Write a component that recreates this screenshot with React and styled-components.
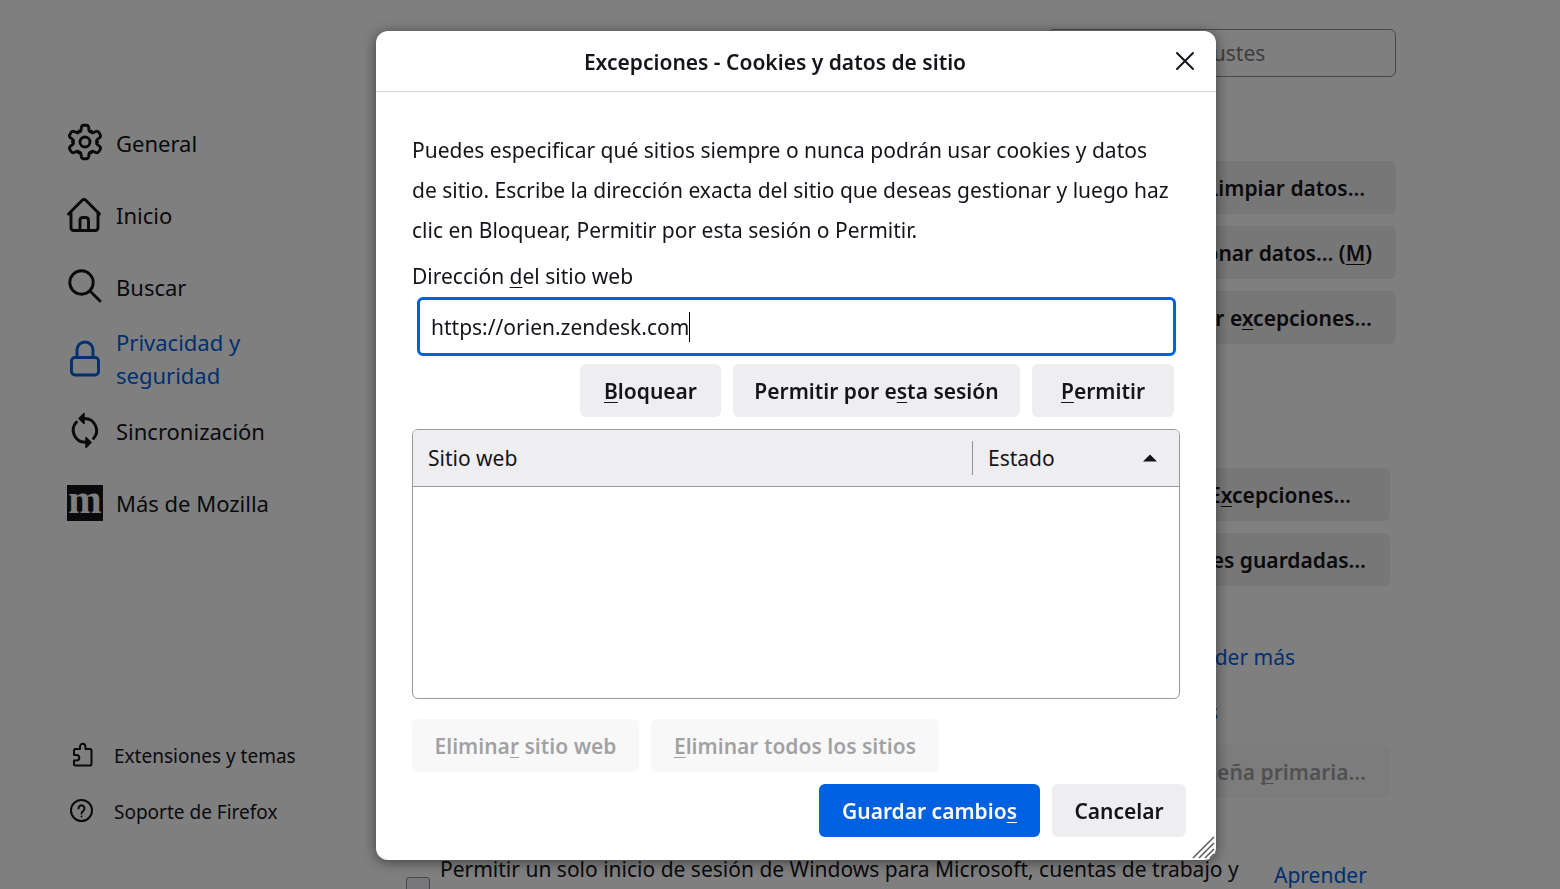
import React from "react";
import styled, { createGlobalStyle } from "styled-components";

const GlobalStyle = createGlobalStyle`
  * {
    box-sizing: border-box;
  }
  body {
    margin: 0;
    background: #fff;
    color: #15141a;
    font-family: "Noto Sans", "Open Sans", sans-serif;
    font-size: 21px;
  }
  button, input {
    font: inherit;
    color: inherit;
  }
`;

const Page = styled.div`
  display: flex;
  height: 100vh;
  overflow: hidden;
`;

const Sidebar = styled.aside`
  flex: 0 0 406px;
  display: flex;
  flex-direction: column;
  padding: 107px 100px 49px 67px;
`;

const NavList = styled.nav`
  display: flex;
  flex-direction: column;
  margin-top: ${(p) => (p.$bottom ? "auto" : "0")};
`;

const NavItem = styled.a`
  display: flex;
  align-items: center;
  gap: ${(p) => (p.$small ? "16px" : "13px")};
  height: ${(p) => (p.$small ? "56px" : "72px")};
  padding-left: ${(p) => (p.$small ? "2px" : "0")};
  font-size: ${(p) => (p.$small ? "19px" : "22px")};
  line-height: 33px;
  color: ${(p) => (p.$active ? "#0061e0" : "inherit")};
  text-decoration: none;
  svg {
    flex: none;
    overflow: visible;
    fill: none;
    stroke: currentColor;
    stroke-width: 2.9;
    stroke-linecap: round;
    stroke-linejoin: round;
  }
`;

const MozillaMark = styled.span`
  flex: none;
  width: 36px;
  height: 36px;
  background: #15141a;
  color: #fff;
  font: bold 40px/30px "Liberation Serif", serif;
  text-align: center;
`;

const Main = styled.main`
  flex: 1;
  max-width: 990px;
  display: flex;
  flex-direction: column;
  padding-top: 29px;
`;

const SearchInput = styled.input`
  align-self: flex-end;
  flex: none;
  width: 348px;
  height: 48px;
  padding: 0 0 0 42px;
  border: 1px solid #8f8f9d;
  border-radius: 6px;
  background: #fff;
  &::placeholder {
    color: #7b7b80;
    opacity: 1;
  }
`;

const Button = styled.button`
  flex: none;
  height: 53px;
  min-width: ${(p) => p.$min || "134px"};
  padding: 0 16px;
  border: 0;
  border-radius: 6px;
  background: ${(p) => (p.$primary ? "#0061e0" : "#eeeef0")};
  color: ${(p) => (p.$primary ? "#fbfbfe" : "#15141a")};
  font-weight: 600;
  white-space: nowrap;
  &:disabled {
    opacity: 0.4;
  }
`;

const ButtonStack = styled.div`
  align-self: flex-end;
  display: flex;
  flex-direction: column;
  align-items: flex-end;
  gap: 12px;
  margin: ${(p) => p.$top} ${(p) => (p.$inset ? "6px" : "0")} 0 0;
  ${Button} {
    padding: 0 24px;
  }
`;

const Key = styled.u`
  text-decoration-thickness: 1px;
  text-underline-offset: 3px;
  text-decoration-skip-ink: none;
`;

const LinkLine = styled.p`
  display: flex;
  justify-content: flex-end;
  margin: ${(p) => p.$top} ${(p) => p.$right} 0 0;
  line-height: 32px;
`;

const Link = styled.a`
  color: #0061e0;
  text-decoration: none;
`;

const CheckRow = styled.div`
  display: flex;
  align-items: flex-start;
  flex: none;
  margin-top: 55px;
  line-height: 32px;
`;

const Checkbox = styled.input`
  appearance: none;
  flex: none;
  width: 24px;
  height: 24px;
  margin: 24px 10px 0 0;
  border: 1px solid #8f8f9d;
  border-radius: 3px;
  background: #f0f0f4;
`;

const CheckLabel = styled.label`
  flex: 0 0 834px;
`;

const MoreLink = styled(Link)`
  padding-top: 6px;
`;

const Overlay = styled.div`
  position: fixed;
  inset: 0;
  display: flex;
  align-items: center;
  justify-content: center;
  padding: 2px 0 0 32px;
  background: rgba(0, 0, 0, 0.5);
`;

const Dialog = styled.section`
  position: relative;
  width: 100%;
  max-width: 840px;
  border-radius: 12px;
  background: #fff;
  box-shadow: 0 2px 14px rgba(0, 0, 0, 0.5);
`;

const DialogHeader = styled.header`
  display: flex;
  align-items: center;
  height: 61px;
  padding: 1px 20px 0 0;
  border-bottom: 1px solid #d8d8da;
`;

const Title = styled.h1`
  flex: 1;
  margin: 0;
  font-size: 21px;
  font-weight: 600;
  text-align: center;
`;

const CloseButton = styled.button`
  display: flex;
  padding: 0;
  border: 0;
  background: none;
`;

const DialogBody = styled.div`
  display: flex;
  flex-direction: column;
  padding: 38px 36px 0;
`;

const Intro = styled.p`
  margin: 0;
  line-height: 40px;
  white-space: nowrap;
`;

const FieldLabel = styled.label`
  margin-top: 10px;
  line-height: 32px;
`;

const Field = styled.div`
  display: flex;
  align-items: center;
  height: 59px;
  margin: 5px 4px 8px 5px;
  padding: 0 11px;
  border: 3px solid #0061e0;
  border-radius: 6px;
`;

const UrlInput = styled.input`
  field-sizing: content;
  padding: 0;
  border: 0;
  outline: 0;
  background: none;
`;

const Caret = styled.span`
  width: 1px;
  height: 30px;
  background: #000;
`;

const Actions = styled.div`
  display: flex;
  justify-content: ${(p) => (p.$end ? "flex-end" : "flex-start")};
  gap: 12px;
  padding: ${(p) => p.$pad || "0"};
`;

const TableFrame = styled.div`
  height: 270px;
  margin: 12px 0 20px;
  border: 1px solid #9a9a9e;
  border-radius: 6px;
  overflow: hidden;
`;

const Table = styled.table`
  width: 100%;
  border-collapse: collapse;
  table-layout: fixed;
`;

const Th = styled.th`
  width: ${(p) => p.$width || "auto"};
  height: 56px;
  padding: 0;
  background: #eeeef0;
  border-bottom: 1px solid #9a9a9e;
  font-weight: 400;
  text-align: left;
`;

const ThInner = styled.div`
  display: flex;
  align-items: center;
  justify-content: space-between;
  height: 34px;
  padding: 0 22px 0 15px;
  border-left: ${(p) => (p.$divided ? "1px solid #8f8f9d" : "0")};
`;

const Grip = styled.svg`
  position: absolute;
  right: 1px;
  bottom: 1px;
`;

const GearIcon = () => (
  <svg width="36" height="36" viewBox="-18 -17 36 36">
    <circle r="5" />
    {[0, 60, 120, 180, 240, 300].map((a) => (
      <path
        key={a}
        transform={`rotate(${a})`}
        d="M-6.2-10.8C-4.9-10-4.2-10.6-4-12L-3.7-14.5Q-3.2-16.8-1.4-16.8H1.4Q3.2-16.8 3.7-14.5L4-12C4.2-10.600 4.900-10 6.200-10.800"
      />
    ))}
  </svg>
);

const HomeIcon = () => (
  <svg width="36" height="36" viewBox="0 0 36 36">
    <path d="M1.5 17 15.2 3.2Q17 1.6 18.8 3.2L32.500 17M4 15V30.500Q4 33.500 7 33.500H28Q31 33.500 31 30.500V15M13 33V23.500Q13 20.500 16 20.500H18.500Q21.500 20.500 21.500 23.500V33" />
  </svg>
);

const SearchIcon = () => (
  <svg width="36" height="36" viewBox="0 0 36 36">
    <circle cx="14.500" cy="13.500" r="11.700" />
    <path d="M23 22 33 32" />
  </svg>
);

const LockIcon = () => (
  <svg width="36" height="36" viewBox="0 0 36 36">
    <rect x="4.500" y="16.500" width="27" height="17.500" rx="3.500" />
    <path d="M10 16V9a8 8 0 0 1 16 0V16" />
  </svg>
);

const SyncIcon = () => (
  <svg width="36" height="36" viewBox="0 0 36 36">
    <path d="M9.500 9A12 12 0 0 0 18.500 29.200M26.500 25.500A12 12 0 0 0 17.500 5.500" />
    <path d="M17 0.500V10.500L12 5.500ZM19 24.500V34.500L24 29.500Z" fill="currentColor" strokeWidth="1.500" />
  </svg>
);

const PuzzleIcon = () => (
  <svg width="29" height="28" viewBox="0 0 29 28">
    <path
      strokeWidth="2"
      d="M5 11V8.500Q5 7 6.500 7H11V4.500a2.700 2.700 0 0 1 5.400 0V7H21Q22.500 7 22.500 8.500V22Q22.500 23.500 21 23.500H6.500Q5 23.500 5 22V18.500H7.500a2.800 2.800 0 0 0 0-5.600H5V11"
    />
  </svg>
);

const HelpIcon = () => (
  <svg width="29" height="28" viewBox="0 0 29 28">
    <g strokeWidth="2">
      <circle cx="12.500" cy="12.500" r="10.500" />
      <path d="M9.500 10.500a3 3 0 1 1 4.800 2.300Q12.500 14 12.500 15.500" />
      <path d="M12.500 18.400v.1" />
    </g>
  </svg>
);

export default function App() {
  return (
    <>
      <GlobalStyle />
      <Page>
        <Sidebar>
          <NavList>
            <NavItem href="#general"><GearIcon />General</NavItem>
            <NavItem href="#inicio"><HomeIcon />Inicio</NavItem>
            <NavItem href="#buscar"><SearchIcon />Buscar</NavItem>
            <NavItem href="#privacidad" $active>
              <LockIcon />
              <span>Privacidad y<br />seguridad</span>
            </NavItem>
            <NavItem href="#sync"><SyncIcon />Sincronización</NavItem>
            <NavItem href="#mozilla">
              <MozillaMark aria-hidden="true">m</MozillaMark>
              Más de Mozilla
            </NavItem>
          </NavList>
          <NavList $bottom>
            <NavItem href="#extensiones" $small><PuzzleIcon />Extensiones y temas</NavItem>
            <NavItem href="#soporte" $small><HelpIcon />Soporte de Firefox</NavItem>
          </NavList>
        </Sidebar>

        <Main>
          <SearchInput type="search" aria-label="Buscar en Ajustes" placeholder="Buscar en Ajustes" />
          <ButtonStack $top="84px">
            <Button type="button" $min="220px">Limpiar datos…</Button>
            <Button type="button">Gestionar datos… (<Key>M</Key>)</Button>
            <Button type="button">Gestionar e<Key>x</Key>cepciones…</Button>
          </ButtonStack>
          <ButtonStack $top="124px" $inset>
            <Button type="button" $min="220px">E<Key>x</Key>cepciones…</Button>
            <Button type="button">Credenciales guardadas…</Button>
          </ButtonStack>
          <LinkLine $top="55px" $right="101px"><Link href="#mas">Aprender más</Link></LinkLine>
          <LinkLine $top="23px" $right="178px"><Link href="#alertas">Aprender más</Link></LinkLine>
          <ButtonStack $top="17px" $inset>
            <Button type="button" disabled>Cambiar contraseña <Key>p</Key>rimaria…</Button>
          </ButtonStack>
          <CheckRow>
            <Checkbox type="checkbox" id="sso" />
            <CheckLabel htmlFor="sso">
              Permitir un solo inicio de sesión de Windows para Microsoft, cuentas de trabajo y escuela
            </CheckLabel>
            <MoreLink href="#sso-mas">Aprender más</MoreLink>
          </CheckRow>
        </Main>
      </Page>

      <Overlay>
        <Dialog role="dialog" aria-labelledby="dialog-title">
          <DialogHeader>
            <Title id="dialog-title">Excepciones - Cookies y datos de sitio</Title>
            <CloseButton type="button" aria-label="Cerrar">
              <svg width="22" height="22" viewBox="0 0 22 22" stroke="#15141a" strokeWidth="2" strokeLinecap="round">
                <path d="M3 2 19 18M19 2 3 18" />
              </svg>
            </CloseButton>
          </DialogHeader>
          <DialogBody>
            <Intro>
              Puedes especificar qué sitios siempre o nunca podrán usar cookies y datos<br />
              de sitio. Escribe la dirección exacta del sitio que deseas gestionar y luego haz<br />
              clic en Bloquear, Permitir por esta sesión o Permitir.
            </Intro>
            <FieldLabel htmlFor="url">Dirección <Key>d</Key>el sitio web</FieldLabel>
            <Field>
              <UrlInput id="url" type="text" defaultValue="https://orien.zendesk.com" />
              <Caret />
            </Field>
            <Actions $end $pad="0 6px 0 0">
              <Button type="button" $min="141px"><Key>B</Key>loquear</Button>
              <Button type="button" $min="287px">Permitir por e<Key>s</Key>ta sesión</Button>
              <Button type="button" $min="142px"><Key>P</Key>ermitir</Button>
            </Actions>
            <TableFrame>
              <Table>
                <thead>
                  <tr>
                    <Th scope="col"><ThInner>Sitio web</ThInner></Th>
                    <Th scope="col" $width="207px">
                      <ThInner $divided>
                        Estado
                        <svg width="14" height="8" viewBox="0 0 14 8"><path d="M0 7.500 7 0.500 14 7.500Z" fill="#15141a" /></svg>
                      </ThInner>
                    </Th>
                  </tr>
                </thead>
                <tbody />
              </Table>
            </TableFrame>
            <Actions>
              <Button type="button" disabled $min="227px">Elimina<Key>r</Key> sitio web</Button>
              <Button type="button" disabled $min="288px"><Key>E</Key>liminar todos los sitios</Button>
            </Actions>
          </DialogBody>
          <Actions $end $pad="12px 30px 23px">
            <Button type="button" $primary $min="221px">Guardar cambio<Key>s</Key></Button>
            <Button type="button">Cancelar</Button>
          </Actions>
          <Grip width="24" height="24" viewBox="0 0 24 24" stroke="#5b5b60" strokeWidth="1.500">
            <path d="M2 23 23 2M8 23 23 8M14 23 23 14M19 23 23 19" />
          </Grip>
        </Dialog>
      </Overlay>
    </>
  );
}
